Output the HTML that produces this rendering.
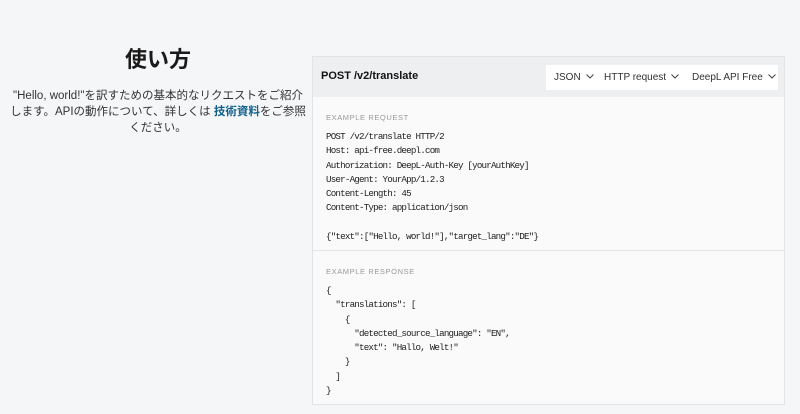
<!DOCTYPE html>
<html><head><meta charset="utf-8"><style>
*{margin:0;padding:0;box-sizing:border-box}
body{width:800px;height:414px;background:#f5f6f8;font-family:"Liberation Sans","Noto Sans CJK JP",sans-serif;position:relative;overflow:hidden;color:#222}
h1{position:absolute;left:0;width:316px;top:42px;text-align:center;font-size:22px;font-weight:bold;color:#1a1a1a}
.intro{position:absolute;left:10px;width:296px;top:88px;text-align:center;font-size:11.5px;line-height:16px;color:#333}
.intro a{color:#0f5f8a;font-weight:bold;text-decoration:none}
.panel{position:absolute;left:312px;top:56px;width:473px;height:349px;border:1px solid #e2e3e5;background:#fafafa}
.hd{height:40px;background:#eeeff1;position:relative}
.hd .t{position:absolute;left:8px;top:13px;font-size:11px;font-weight:bold;color:#111}
.dd{position:absolute;left:233px;top:8px;width:232px;height:25px;background:#fff;font-size:10px;color:#333;line-height:25px;white-space:nowrap}
.dd span{position:absolute;top:0}
.dd svg{vertical-align:middle;margin-left:5px;margin-top:-2px}
.sec{position:absolute;left:0;right:0;padding-left:13px}
.lbl{font-size:7.5px;color:#999;letter-spacing:.6px}
pre{font-family:"Liberation Mono",monospace;font-size:9.2px;letter-spacing:-0.8px;line-height:14.3px;color:#222}
.div{position:absolute;left:0;right:0;top:193px;border-top:1px solid #e4e5e7}
</style></head><body>
<h1>使い方</h1>
<div class="intro">"Hello, world!"を訳すための基本的なリクエストをご紹介します。APIの動作について、詳しくは <a>技術資料</a>をご参照ください。</div>
<div class="panel">
<div class="hd"><div class="t">POST /v2/translate</div>
<div class="dd"><span style="left:8px">JSON<svg width="8" height="5" viewBox="0 0 8 5"><path d="M.5.5L4 4 7.5.5" fill="none" stroke="#444" stroke-width="1"/></svg></span><span style="left:58px">HTTP request<svg width="8" height="5" viewBox="0 0 8 5"><path d="M.5.5L4 4 7.5.5" fill="none" stroke="#444" stroke-width="1"/></svg></span><span style="left:146px">DeepL API Free<svg width="8" height="5" viewBox="0 0 8 5"><path d="M.5.5L4 4 7.5.5" fill="none" stroke="#444" stroke-width="1"/></svg></span></div></div>
<div class="sec" style="top:56px"><div class="lbl">EXAMPLE REQUEST</div>
<pre style="margin-top:8px">POST /v2/translate HTTP/2
Host: api-free.deepl.com
Authorization: DeepL-Auth-Key [yourAuthKey]
User-Agent: YourApp/1.2.3
Content-Length: 45
Content-Type: application/json

{"text":["Hello, world!"],"target_lang":"DE"}</pre></div>
<div class="div"></div>
<div class="sec" style="top:210px"><div class="lbl">EXAMPLE RESPONSE</div>
<pre style="margin-top:8px">{
  "translations": [
    {
      "detected_source_language": "EN",
      "text": "Hallo, Welt!"
    }
  ]
}</pre></div>
</div>
</body></html>
